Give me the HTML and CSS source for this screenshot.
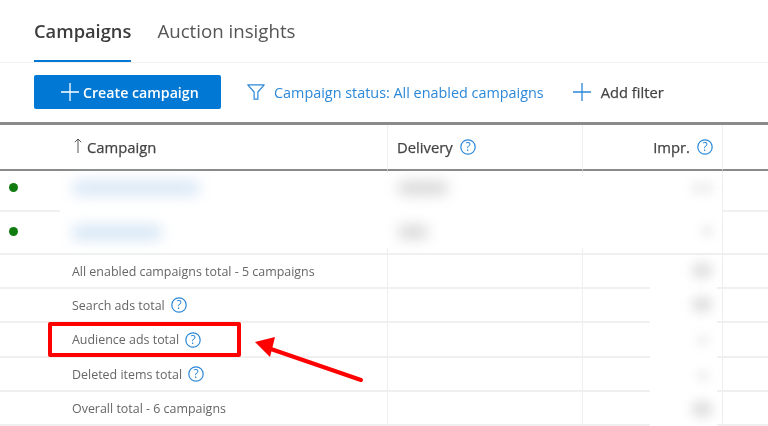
FILE: index.html
```html
<!DOCTYPE html>
<html lang="en">
<head>
<meta charset="utf-8">
<title>Campaigns</title>
<link rel="stylesheet" href="styles.css">
</head>
<body>
<div class="page">
  <nav class="tabs">
    <a class="tab tab-active">Campaigns</a>
    <a class="tab">Auction insights</a>
  </nav>
  <div class="toolbar">
    <button class="create">
      <svg class="plus" viewBox="0 0 18 18"><path d="M9 0v18M0 9h18"/></svg>
      <span>Create campaign</span>
    </button>
    <a class="status">
      <svg class="funnel" viewBox="0 0 18 16"><path d="M.8.8h16.4l-6.3 7.2v7.2H7.1V8z"/></svg>
      <span>Campaign status: All enabled campaigns</span>
    </a>
    <a class="add">
      <svg class="plus-blue" viewBox="0 0 18 18"><path d="M9 0v18M0 9h18"/></svg>
      <span>Add filter</span>
    </a>
  </div>
  <div class="grid">
    <div class="head c1">
      <svg class="sort" viewBox="0 0 8 15"><path d="M4 15V1M.8 4.2 4 1l3.2 3.2"/></svg>
      <span>Campaign</span>
    </div>
    <div class="head c2"><span>Delivery</span><svg class="help" viewBox="0 0 16 16"><circle cx="8" cy="8" r="7.2"/><text x="8" y="12">?</text></svg></div>
    <div class="head c3"><span>Impr.</span><svg class="help" viewBox="0 0 16 16"><circle cx="8" cy="8" r="7.2"/><text x="8" y="12">?</text></svg></div>
    <div class="head c4"></div>

    <div class="row-tall row-first c1"><i class="dot"></i></div><div class="row-tall c2"></div><div class="row-tall c3"></div><div class="row-tall c4"></div>
    <div class="row-tall row-second c1"><i class="dot"></i></div><div class="row-tall c2"></div><div class="row-tall c3"></div><div class="row-tall c4"></div>

    <div class="row c1"><span>All enabled campaigns total - 5 campaigns</span></div><div class="row c2"></div><div class="row c3"></div><div class="row c4"></div>
    <div class="row c1"><span>Search ads total</span><svg class="help" viewBox="0 0 16 16"><circle cx="8" cy="8" r="7.2"/><text x="8" y="12">?</text></svg></div><div class="row c2"></div><div class="row c3"></div><div class="row c4"></div>
    <div class="row c1"><span>Audience ads total</span><svg class="help" viewBox="0 0 16 16"><circle cx="8" cy="8" r="7.2"/><text x="8" y="12">?</text></svg></div><div class="row c2"></div><div class="row c3"></div><div class="row c4"></div>
    <div class="row c1"><span>Deleted items total</span><svg class="help" viewBox="0 0 16 16"><circle cx="8" cy="8" r="7.2"/><text x="8" y="12">?</text></svg></div><div class="row c2"></div><div class="row c3"></div><div class="row c4"></div>
    <div class="row c1"><span>Overall total - 6 campaigns</span></div><div class="row c2"></div><div class="row c3"></div><div class="row c4"></div>
  </div>

  <div class="mask mask-top">
    <i class="smear blue s1"></i><i class="smear blue s2"></i>
    <i class="smear grey s3"></i><i class="smear grey s4"></i>
    <i class="smear pale s5"></i><i class="smear pale s6"></i>
  </div>
  <div class="mask mask-right">
    <i class="smear soft s7"></i><i class="smear soft s8"></i>
    <i class="smear pale s9"></i><i class="smear pale s10"></i>
    <i class="smear soft s11"></i>
  </div>

  <div class="callout"></div>
  <svg class="arrow" viewBox="0 0 768 426">
    <path class="arrow-line" d="M361 380 268 348"/>
    <path class="arrow-head" d="M255 342 275 337 270 357z"/>
  </svg>
</div>
</body>
</html>
```
FILE: styles.css
```css
* { box-sizing: border-box; }
html, body { margin: 0; padding: 0; background: #fff; }
.page {
  position: relative;
  width: 768px;
  height: 426px;
  overflow: hidden;
  font-family: "Open Sans", "Noto Sans", sans-serif;
  color: #444;
  filter: blur(0.35px);
}
.tabs {
  display: flex;
  gap: 26px;
  height: 63px;
  padding: 17px 0 0 34px;
  border-bottom: 1px solid #f1f1f1;
}
.tab {
  height: 45px;
  font-size: 18.7px;
  line-height: 27px;
  color: #555;
}
.tab-active {
  font-size: 18.3px;
  font-weight: 600;
  color: #3c3c3c;
  border-bottom: 2px solid #0078d4;
}
.toolbar {
  display: flex;
  align-items: center;
  height: 59px;
  padding: 0 0 1px 34px;
}
.create {
  display: flex;
  align-items: center;
  gap: 4px;
  width: 187px;
  height: 34px;
  padding: 0 0 0 27px;
  border: 0;
  border-radius: 2px;
  background: #0078d4;
  color: #fff;
  font: 600 14.2px "Open Sans", sans-serif;
}
.plus { width: 18px; height: 18px; flex: none; }
.plus path { stroke: #fff; stroke-width: 1.3; fill: none; }
.status {
  display: flex;
  align-items: center;
  gap: 9px;
  margin-left: 26px;
  font-size: 14.4px;
  color: #2b88d8;
}
.funnel { width: 18px; height: 16px; flex: none; }
.funnel path { stroke: #2b88d8; stroke-width: 1.2; fill: none; stroke-linejoin: round; }
.add {
  display: flex;
  align-items: center;
  gap: 10px;
  margin-left: 29px;
  font-size: 14.7px;
  color: #444;
  -webkit-text-stroke: 0.25px #444;
}
.plus-blue { width: 18px; height: 18px; flex: none; }
.plus-blue path { stroke: #2b88d8; stroke-width: 1.3; fill: none; }
.grid {
  display: grid;
  grid-template-columns: 388px 195px 140px 45px;
  grid-template-rows: 46px 41px 43px 34px 34px 35px 34px 34px;
  border-top: 3px solid #8a8a8a;
}
.grid > div {
  display: flex;
  align-items: center;
  border-right: 1px solid #efefef;
  border-bottom: 2px solid #f0f0f0;
}
.grid > .c4 { border-right: 0; }
.grid > .head { border-bottom: 2px solid #8a8a8a; font-size: 14.8px; }
.head span { -webkit-text-stroke: 0.25px #444; }
.head.c1 { padding-left: 74px; gap: 5px; }
.head.c2 { padding-left: 9px; gap: 7px; }
.head.c3 { justify-content: flex-end; gap: 7px; padding-right: 9px; }
.row { font-size: 12.45px; color: #666; }
.row.c1 { padding-left: 72px; gap: 6px; }
.row-tall.c1 { padding-left: 9px; }
.row-first.c1 { padding-bottom: 7px; }
.row-second.c1 { padding-bottom: 2px; }
.dot { width: 9px; height: 9px; border-radius: 50%; background: #107c10; }
.sort { width: 8px; height: 15px; margin-top: -4px; }
.sort path { stroke: #555; stroke-width: 1; fill: none; }
.help { width: 16px; height: 16px; flex: none; }
.help circle { fill: none; stroke: #2b88d8; stroke-width: 1.2; }
.help text { font: 12px "Open Sans", sans-serif; fill: #2b88d8; text-anchor: middle; }
.mask { position: absolute; background: #fff; }
.mask-top { left: 60px; top: 173px; width: 662px; height: 75px; }
.mask-right { left: 650px; top: 256px; width: 67px; height: 170px; }
.smear { position: absolute; display: block; border-radius: 6px; }
.blue { background: #d6e6f5; filter: blur(7px); }
.grey { background: #d8d8d8; filter: blur(7px); }
.soft { background: #dedede; filter: blur(6px); }
.pale { background: #f2f2f2; filter: blur(5px); }
.s1 { left: 12px; top: 8px; width: 128px; height: 14px; }
.s2 { left: 12px; top: 52px; width: 90px; height: 15px; }
.s3 { left: 338px; top: 8px; width: 50px; height: 14px; }
.s4 { left: 338px; top: 52px; width: 30px; height: 14px; }
.s5 { left: 630px; top: 8px; width: 24px; height: 14px; }
.s6 { left: 640px; top: 51px; width: 14px; height: 14px; }
.s7 { left: 42px; top: 7px; width: 20px; height: 15px; }
.s8 { left: 42px; top: 41px; width: 20px; height: 15px; }
.s9 { left: 46px; top: 78px; width: 14px; height: 13px; }
.s10 { left: 46px; top: 113px; width: 14px; height: 13px; }
.s11 { left: 42px; top: 145px; width: 20px; height: 16px; }
.callout {
  position: absolute;
  left: 48px;
  top: 322px;
  width: 193px;
  height: 35px;
  border: 4px solid #f00;
  border-radius: 2px;
}
.arrow { position: absolute; left: 0; top: 0; width: 768px; height: 426px; }
.arrow-line { stroke: #f00; stroke-width: 4; stroke-linecap: round; fill: none; }
.arrow-head { fill: #f00; }
```
